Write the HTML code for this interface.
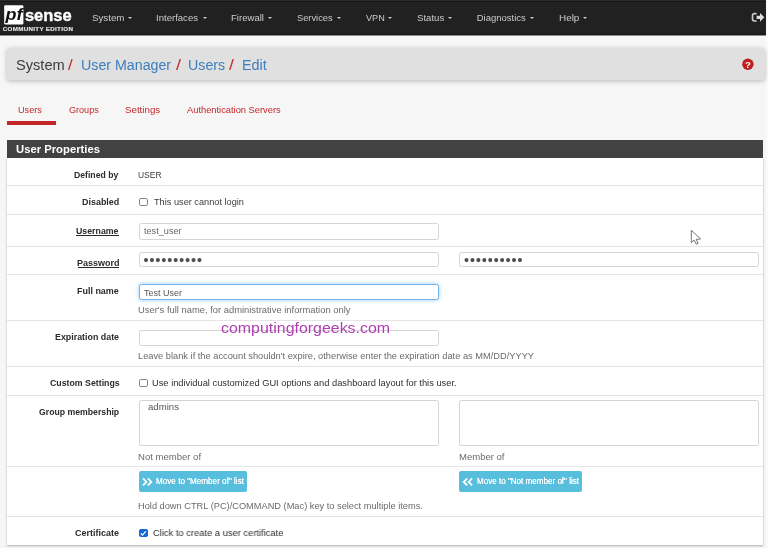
<!DOCTYPE html>
<html><head><meta charset="utf-8">
<style>
*{box-sizing:border-box;margin:0;padding:0}
html,body{width:768px;height:548px;overflow:hidden;background:#f6f6f6;font-family:"Liberation Sans",sans-serif;color:#333}
div{position:absolute}
.tx{white-space:nowrap;transform-origin:0 0;line-height:20px}
#nav{left:0;top:0;width:766px;height:35px;background:#212121;border-bottom:2px solid #1a1a1a}
.car{width:0;height:0;border-left:2px solid transparent;border-right:2px solid transparent;border-top:2.5px solid #ccc;top:17px}
#bc{left:7px;top:48px;width:758px;height:32px;background:#e0e0e0;border-radius:3px;box-shadow:0 1px 5px rgba(0,0,0,.26)}
#panelhead{left:7px;top:140px;width:756px;height:18px;background:#424242}
#panel{left:7px;top:158px;width:756px;height:387px;background:#fff;box-shadow:0 1px 2px rgba(0,0,0,.3)}
.sep{left:7px;width:756px;height:1px;background:#e4e4e4}
.inp{height:15.5px;border:1px solid #d4d4d4;border-radius:2.5px;background:#fff}
.sel{height:46px;top:400px;width:300px;border:1px solid #d4d4d4;border-radius:2.5px;background:#fff}
.cb{width:8.5px;height:8.5px;border:1px solid #858585;border-radius:1.8px;background:#fff}
.btn{top:471px;height:20.5px;background:#58bedd;border-radius:2px}
.dot{width:4.5px;height:4.5px;border-radius:50%;background:#4a4a4a;top:258px}
#root{left:0;top:0;width:768px;height:548px;will-change:transform;filter:blur(0.45px)}
</style></head><body>
<div id="root">
<div id="nav"></div><div style="left:0;top:35px;width:766px;height:1px;background:#8e8e8e"></div>
<div style="left:0;top:0;width:766px;height:1px;background:#2a2a2a"></div><div style="left:0;top:1px;width:766px;height:1px;background:#161616"></div>
<div style="left:766px;top:0;width:2px;height:548px;background:#fbfbfb"></div>
<div class="car" style="left:128px"></div><div class="car" style="left:202.75px"></div><div class="car" style="left:267.5px"></div><div class="car" style="left:336.5px"></div><div class="car" style="left:388.25px"></div><div class="car" style="left:447.75px"></div><div class="car" style="left:530.25px"></div><div class="car" style="left:582.5px"></div>
<svg style="position:absolute;left:0;top:0" width="80" height="35" viewBox="0 0 80 35" font-family="Liberation Sans, sans-serif">
<rect x="4.2" y="5.2" width="19.2" height="19.3" rx="1.2" fill="#fff"/>
<text x="5.6" y="19.9" font-size="15.8" font-weight="bold" font-style="italic" fill="#111" textLength="17" lengthAdjust="spacingAndGlyphs">pf</text>
<text x="24.9" y="20.9" font-size="17" stroke="#fff" stroke-width="0.4" font-weight="bold" fill="#fff" textLength="46.8" lengthAdjust="spacingAndGlyphs">sense</text>
<text x="2.8" y="31.3" font-size="6.1" font-weight="bold" fill="#e4e4e4" stroke="#e4e4e4" stroke-width="0.15" textLength="70.4" lengthAdjust="spacingAndGlyphs" letter-spacing="0.3">COMMUNITY EDITION</text>
</svg>
<div id="bc"></div>
<div style="left:7px;top:121px;width:48.6px;height:4px;background:#c4272a"></div>
<div id="panel"></div>
<div id="panelhead"></div>
<div class="sep" style="top:185px"></div>
<div class="sep" style="top:214.3px"></div>
<div class="sep" style="top:246.3px"></div>
<div class="sep" style="top:274.3px"></div>
<div class="sep" style="top:320.3px"></div>
<div class="sep" style="top:366px"></div>
<div class="sep" style="top:395.2px"></div>
<div class="sep" style="top:465.8px"></div>
<div class="sep" style="top:516px"></div>
<div class="inp" style="left:139px;top:223px;width:300px;height:17px"></div>
<div class="inp" style="left:139px;top:252px;width:300px;height:15px"></div>
<div class="inp" style="left:459px;top:252px;width:300px;height:15px"></div>
<div class="inp" style="left:139px;top:284.3px;width:300px;border-color:#72b3ea;box-shadow:0 0 4px rgba(102,175,233,.65)"></div>
<div class="inp" style="left:139px;top:330.3px;width:300px"></div>
<div class="sel" style="left:139px"></div>
<div class="sel" style="left:459px"></div>
<div class="cb" style="left:139.3px;top:197.5px"></div>
<div class="cb" style="left:139.3px;top:378.6px"></div>
<div class="cb" style="left:139.3px;top:528.5px;background:#1766d6;border-color:#1766d6"></div>
<svg style="position:absolute;left:139.3px;top:528.5px" width="8.5" height="8.5" viewBox="0 0 8.5 8.5"><path d="M1.8 4.4 L3.5 6.1 L6.8 2.4" stroke="#fff" stroke-width="1.3" fill="none"/></svg>
<div class="btn" style="left:139px;width:107.8px"></div>
<div class="btn" style="left:459.1px;width:123.4px"></div>
<!--DOTS-->
<svg style="position:absolute;left:0;top:0" width="768" height="548" viewBox="0 0 768 548" font-family="Liberation Sans, sans-serif">
<path d="M756.6 13.6 h-2.2 a1.9 1.9 0 0 0 -1.9 1.9 v3.6 a1.9 1.9 0 0 0 1.9 1.9 h2.2" stroke="#cfcfcf" stroke-width="1.6" fill="none"/>
<path d="M756.6 15.7 H760 V12.9 L764.3 17.3 L760 21.7 V18.9 H756.6 Z" fill="#dcdcdc"/>
<circle cx="747.9" cy="64.2" r="5.7" fill="#be1f1f"/>
<text x="747.9" y="67.6" font-size="9.5" font-weight="bold" fill="#fff" text-anchor="middle">?</text>
<g fill="#4e4e4e"><circle cx="146.00" cy="260.1" r="2.05"/><circle cx="151.94" cy="260.1" r="2.05"/><circle cx="157.88" cy="260.1" r="2.05"/><circle cx="163.82" cy="260.1" r="2.05"/><circle cx="169.76" cy="260.1" r="2.05"/><circle cx="175.70" cy="260.1" r="2.05"/><circle cx="181.64" cy="260.1" r="2.05"/><circle cx="187.58" cy="260.1" r="2.05"/><circle cx="193.52" cy="260.1" r="2.05"/><circle cx="199.46" cy="260.1" r="2.05"/><circle cx="466.50" cy="260.1" r="2.05"/><circle cx="472.44" cy="260.1" r="2.05"/><circle cx="478.38" cy="260.1" r="2.05"/><circle cx="484.32" cy="260.1" r="2.05"/><circle cx="490.26" cy="260.1" r="2.05"/><circle cx="496.20" cy="260.1" r="2.05"/><circle cx="502.14" cy="260.1" r="2.05"/><circle cx="508.08" cy="260.1" r="2.05"/><circle cx="514.02" cy="260.1" r="2.05"/><circle cx="519.96" cy="260.1" r="2.05"/></g>
<g stroke="#fff" stroke-width="1.8" fill="none">
<path d="M143 478.4 L146.4 481.9 L143 485.4"/><path d="M147.9 478.4 L151.3 481.9 L147.9 485.4"/>
<path d="M467.2 478.4 L463.8 481.9 L467.2 485.4"/><path d="M472.1 478.4 L468.7 481.9 L472.1 485.4"/>
</g>
<path transform="translate(691.3 230.3)" d="M0 0 L0 12.3 L2.8 9.8 L4.9 13.9 L6.8 13 L4.9 9.2 L9.2 8.6 Z" fill="#fff" stroke="#505050" stroke-width="0.8" stroke-linejoin="round"/>
</svg>
<div class="tx" style="left:91.97px;top:8px;font-size:9.5px;font-weight:normal;color:#cccccc;transform:scaleX(1.0250)">System</div>
<div class="tx" style="left:155.99px;top:8px;font-size:9.5px;font-weight:normal;color:#cccccc;transform:scaleX(1.0061)">Interfaces</div>
<div class="tx" style="left:231.49px;top:8px;font-size:9.5px;font-weight:normal;color:#cccccc;transform:scaleX(1.0081)">Firewall</div>
<div class="tx" style="left:296.77px;top:8px;font-size:9.5px;font-weight:normal;color:#cccccc;transform:scaleX(0.9786)">Services</div>
<div class="tx" style="left:365.75px;top:8px;font-size:9.5px;font-weight:normal;color:#cccccc;transform:scaleX(0.9605)">VPN</div>
<div class="tx" style="left:416.74px;top:8px;font-size:9.5px;font-weight:normal;color:#cccccc;transform:scaleX(1.0096)">Status</div>
<div class="tx" style="left:476.75px;top:8px;font-size:9.5px;font-weight:normal;color:#cccccc;transform:scaleX(1.0000)">Diagnostics</div>
<div class="tx" style="left:558.71px;top:8px;font-size:9.5px;font-weight:normal;color:#cccccc;transform:scaleX(1.0417)">Help</div>
<div class="tx" style="left:15.83px;top:55px;font-size:15.1px;font-weight:normal;color:#3c3c3c;transform:scaleX(0.9673)">System</div>
<div class="tx" style="left:68.40px;top:55px;font-size:15.1px;font-weight:normal;color:#c4272a;transform:scaleX(1.1250)">/</div>
<div class="tx" style="left:80.56px;top:55px;font-size:15.1px;font-weight:normal;color:#3d7ebd;transform:scaleX(0.9421)">User Manager</div>
<div class="tx" style="left:175.80px;top:55px;font-size:15.1px;font-weight:normal;color:#c4272a;transform:scaleX(1.2000)">/</div>
<div class="tx" style="left:188.06px;top:55px;font-size:15.1px;font-weight:normal;color:#3d7ebd;transform:scaleX(0.9421)">Users</div>
<div class="tx" style="left:229.00px;top:55px;font-size:15.1px;font-weight:normal;color:#c4272a;transform:scaleX(1.1750)">/</div>
<div class="tx" style="left:241.75px;top:55px;font-size:15.1px;font-weight:normal;color:#3d7ebd;transform:scaleX(0.9520)">Edit</div>
<div class="tx" style="left:18.24px;top:100px;font-size:9.5px;font-weight:normal;color:#c4272a;transform:scaleX(0.9625)">Users</div>
<div class="tx" style="left:69.40px;top:100px;font-size:9.5px;font-weight:normal;color:#c4272a;transform:scaleX(0.9548)">Groups</div>
<div class="tx" style="left:124.58px;top:100px;font-size:9.5px;font-weight:normal;color:#c4272a;transform:scaleX(1.0242)">Settings</div>
<div class="tx" style="left:186.50px;top:100px;font-size:9.5px;font-weight:normal;color:#c4272a;transform:scaleX(0.9800)">Authentication Servers</div>
<div class="tx" style="left:15.94px;top:139px;font-size:10.6px;font-weight:bold;color:#fff;transform:scaleX(1.0641)">User Properties</div>
<div class="tx" style="left:74.09px;top:165px;font-size:9.5px;font-weight:bold;color:#2b2b2b;transform:scaleX(0.9115)">Defined by</div>
<div class="tx" style="left:82.06px;top:192px;font-size:9.5px;font-weight:bold;color:#2b2b2b;transform:scaleX(0.9408)">Disabled</div>
<div class="tx" style="left:76.25px;top:221px;font-size:9.5px;font-weight:bold;color:#2b2b2b;transform:scaleX(0.9239)">Username</div>
<div style="left:76.25px;top:235px;width:42.50px;height:1px;background:#2b2b2b"></div>
<div class="tx" style="left:77.05px;top:253px;font-size:9.5px;font-weight:bold;color:#2b2b2b;transform:scaleX(0.9477)">Password</div>
<div style="left:78.00px;top:267px;width:40.75px;height:1px;background:#2b2b2b"></div>
<div class="tx" style="left:77.31px;top:281px;font-size:9.5px;font-weight:bold;color:#2b2b2b;transform:scaleX(0.9419)">Full name</div>
<div class="tx" style="left:55.32px;top:327px;font-size:9.5px;font-weight:bold;color:#2b2b2b;transform:scaleX(0.9328)">Expiration date</div>
<div class="tx" style="left:49.50px;top:373px;font-size:9.5px;font-weight:bold;color:#2b2b2b;transform:scaleX(0.9233)">Custom Settings</div>
<div class="tx" style="left:39.20px;top:402px;font-size:9.5px;font-weight:bold;color:#2b2b2b;transform:scaleX(0.9149)">Group membership</div>
<div class="tx" style="left:75.30px;top:523px;font-size:9.5px;font-weight:bold;color:#2b2b2b;transform:scaleX(0.9457)">Certificate</div>
<div class="tx" style="left:138.11px;top:165px;font-size:9.5px;font-weight:normal;color:#3d3d3d;transform:scaleX(0.8900)">USER</div>
<div class="tx" style="left:153.75px;top:192px;font-size:9.5px;font-weight:normal;color:#3d3d3d;transform:scaleX(0.9677)">This user cannot login</div>
<div class="tx" style="left:143.75px;top:221px;font-size:9.5px;font-weight:normal;color:#666;transform:scaleX(0.9615)">test_user</div>
<div class="tx" style="left:144.25px;top:283px;font-size:9.5px;font-weight:normal;color:#555;transform:scaleX(0.9437)">Test User</div>
<div class="tx" style="left:138.26px;top:300px;font-size:9.5px;font-weight:normal;color:#6b6b6b;transform:scaleX(0.9876)">User's full name, for administrative information only</div>
<div class="tx" style="left:138.27px;top:346px;font-size:9.5px;font-weight:normal;color:#6b6b6b;transform:scaleX(0.9759)">Leave blank if the account shouldn't expire, otherwise enter the expiration date as MM/DD/YYYY</div>
<div class="tx" style="left:152.02px;top:373px;font-size:9.5px;font-weight:normal;color:#2e2e2e;transform:scaleX(0.9793)">Use individual customized GUI options and dashboard layout for this user.</div>
<div class="tx" style="left:147.60px;top:397px;font-size:9.5px;font-weight:normal;color:#555;transform:scaleX(1.0100)">admins</div>
<div class="tx" style="left:138.00px;top:447px;font-size:9.5px;font-weight:normal;color:#6b6b6b;transform:scaleX(1.0040)">Not member of</div>
<div class="tx" style="left:458.70px;top:447px;font-size:9.5px;font-weight:normal;color:#6b6b6b;transform:scaleX(1.0023)">Member of</div>
<div class="tx" style="left:156.04px;top:471px;font-size:8.5px;font-weight:normal;color:#fff;text-shadow:0 0 .5px #fff;transform:scaleX(0.9560)">Move to "Member of" list</div>
<div class="tx" style="left:476.85px;top:471px;font-size:8.5px;font-weight:normal;color:#fff;text-shadow:0 0 .5px #fff;transform:scaleX(0.9486)">Move to "Not member of" list</div>
<div class="tx" style="left:138.28px;top:496px;font-size:9.5px;font-weight:normal;color:#6b6b6b;transform:scaleX(0.9734)">Hold down CTRL (PC)/COMMAND (Mac) key to select multiple items.</div>
<div class="tx" style="left:153.00px;top:523px;font-size:9.5px;font-weight:normal;color:#2e2e2e;transform:scaleX(0.9848)">Click to create a user certificate</div>
<div class="tx" style="left:220.95px;top:318px;font-size:15.2px;font-weight:normal;color:#ad3fb0;transform:scaleX(1.0487)">computingforgeeks.com</div>
</div>
</body></html>
